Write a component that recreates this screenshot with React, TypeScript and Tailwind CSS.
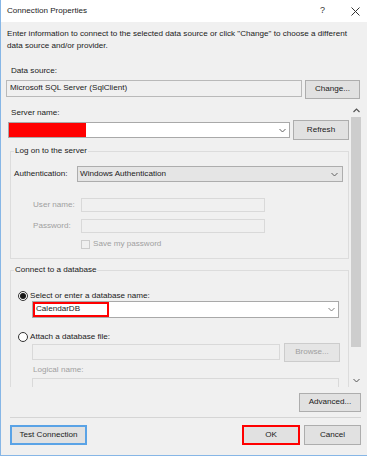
import React from "react";

function Btn({
  label,
  className = "",
  disabled = false,
}: {
  label: string;
  className?: string;
  disabled?: boolean;
}) {
  return (
    <div
      className={`flex items-center justify-center border ${
        disabled
          ? "border-[#cccccc] bg-[#e5e5e5] text-[#a0a0a0]"
          : "border-[#adadad] bg-[#e1e1e1] text-[#1a1a1a]"
      } ${className}`}
    >
      {label}
    </div>
  );
}

function Chevron({ color = "#606060" }: { color?: string }) {
  return (
    <svg width="7" height="5" viewBox="0 0 7 5" fill="none">
      <path d="M0.5 1 L3.5 4 L6.5 1" stroke={color} strokeWidth="1" />
    </svg>
  );
}

function Radio({ checked }: { checked?: boolean }) {
  return (
    <span className="flex h-[10px] w-[10px] items-center justify-center rounded-full border border-[#333333] bg-white">
      {checked && <span className="h-[6px] w-[6px] rounded-full bg-[#1a1a1a]" />}
    </span>
  );
}

export default function App() {
  return (
    <div
      className="relative h-[456px] w-[367px] overflow-hidden whitespace-nowrap border-b border-l border-[#86b6e6] bg-[#f0f0f0] text-[8.1px] text-[#1a1a1a]"
      style={{ fontFamily: '"Liberation Sans", Arial, sans-serif' }}
    >
      {/* title bar */}
      <div className="flex h-[22px] items-center bg-white pl-[6px]">
        <span className="flex-1">Connection Properties</span>
        <span className="w-[31px] text-[9px] text-[#333]">?</span>
        <svg width="9" height="9" viewBox="0 0 9 9" className="mr-[7px]">
          <path d="M0.5 0.5 L8.5 8.5 M8.5 0.5 L0.5 8.5" stroke="#333" strokeWidth="1" />
        </svg>
      </div>

      {/* description */}
      <div className="px-[6px] pt-[6px] leading-[12px]">
        Enter information to connect to the selected data source or click "Change" to choose a different
        <br />
        data source and/or provider.
      </div>

      <div className="mt-[13px] pl-[10px] leading-[12px]">Data source:</div>
      <div className="mt-[3px] flex h-[19px] items-start pl-[5px]">
        <div className="flex h-[17px] w-[296px] items-center border border-[#b9b9b9] bg-[#f0f0f0] pl-[3px]">
          Microsoft SQL Server (SqlClient)
        </div>
        <Btn label="Change..." className="ml-[3px] h-[19px] w-[55px]" />
      </div>

      {/* scroll panel */}
      <div className="ml-[4px] mt-[5px] flex h-[283px] w-[357px]">
        <div className="h-full w-[345px] overflow-hidden">
          <div className="pl-[6px] pt-[3px] leading-[12px]">Server name:</div>
          <div className="mt-[1px] flex h-[20px] items-start">
            <div className="ml-[3px] mt-[2px] flex h-[16px] w-[282px] items-center border border-[#a9a9a9] bg-white">
              <span className="h-full w-[77px] bg-[#ff0000]" />
              <span className="flex-1" />
              <span className="mr-[3px]">
                <Chevron />
              </span>
            </div>
            <Btn label="Refresh" className="ml-[3px] h-[20px] w-[56px]" />
          </div>

          {/* log on group */}
          <fieldset className="ml-[5px] mt-[5px] h-[114px] w-[339px] border border-[#dcdcdc] px-[3px]">
            <legend className="px-[1px] leading-[12px]">Log on to the server</legend>
            <div className="mt-[9px] flex h-[16px] items-center">
              <span className="w-[63px]">Authentication:</span>
              <div className="flex h-[16px] w-[266px] items-center border border-[#adadad] bg-[#e5e5e5] pl-[2px]">
                <span className="flex-1">Windows Authentication</span>
                <span className="mr-[4px]">
                  <Chevron />
                </span>
              </div>
            </div>
            <div className="mt-[16px] flex h-[14px] items-center text-[#a0a0a0]">
              <span className="ml-[19px] w-[48px]">User name:</span>
              <div className="h-[14px] w-[184px] border border-[#d9d9d9] bg-[#f0f0f0]" />
            </div>
            <div className="mt-[7px] flex h-[14px] items-center text-[#a0a0a0]">
              <span className="ml-[19px] w-[48px]">Password:</span>
              <div className="h-[14px] w-[184px] border border-[#d9d9d9] bg-[#f0f0f0]" />
            </div>
            <div className="mt-[5px] flex h-[12px] items-center text-[#a0a0a0]">
              <span className="ml-[67px] h-[9px] w-[9px] border border-[#cccccc] bg-[#f0f0f0]" />
              <span className="ml-[3px]">Save my password</span>
            </div>
          </fieldset>

          {/* connect group */}
          <fieldset className="ml-[5px] mt-[5px] h-[140px] w-[339px] border border-[#dcdcdc] px-[3px]">
            <legend className="px-[1px] leading-[12px]">Connect to a database</legend>
            <div className="mt-[15px] flex h-[10px] items-center">
              <span className="ml-[4px]">
                <Radio checked />
              </span>
              <span className="ml-[2px]">Select or enter a database name:</span>
            </div>
            <div className="ml-[18px] mt-0 flex h-[17px] w-[307px] items-center border border-[#a9a9a9] bg-white">
              <span className="flex h-full w-[76px] items-center border-2 border-[#ff0000] pl-[1px]">
                CalendarDB
              </span>
              <span className="flex-1" />
              <span className="mr-[3px]">
                <Chevron color="#808080" />
              </span>
            </div>
            <div className="mt-[13px] flex h-[12px] items-center">
              <span className="ml-[4px]">
                <Radio />
              </span>
              <span className="ml-[2px]">Attach a database file:</span>
            </div>
            <div className="flex h-[19px] items-start">
              <div className="ml-[18px] mt-[1px] h-[16px] w-[248px] border border-[#d9d9d9] bg-[#f0f0f0]" />
              <Btn label="Browse..." disabled className="ml-[4px] h-[19px] w-[56px]" />
            </div>
            <div className="ml-[19px] mt-[2px] leading-[12px] text-[#a0a0a0]">Logical name:</div>
            <div className="ml-[18px] mt-[2px] h-[16px] w-[307px] border border-[#d9d9d9] bg-[#f0f0f0]" />
          </fieldset>
        </div>

        {/* scrollbar */}
        <div className="flex h-full w-[12px] flex-col items-center">
          <div className="flex h-[13px] items-center">
            <svg width="7" height="5" viewBox="0 0 7 5">
              <path d="M0.5 4 L3.5 1 L6.5 4" stroke="#555" strokeWidth="1.2" fill="none" />
            </svg>
          </div>
          <div className="h-[230px] w-[10px] bg-[#cdcdcd]" />
          <div className="flex-1" />
          <div className="flex h-[13px] items-center">
            <Chevron color="#555" />
          </div>
        </div>
      </div>

      <div className="mt-[6px] flex justify-end pr-[6px]">
        <Btn label="Advanced..." className="h-[19px] w-[62px]" />
      </div>
      <div className="ml-[9px] mt-[5px] h-px w-[351px] bg-[#d5d5d5]" />
      <div className="mt-[7px] flex h-[20px] items-center pl-[9px] pr-[6px]">
        <div className="flex h-[20px] w-[77px] items-center justify-center border-2 border-[#5aa3e6] bg-[#e1e1e1]">
          Test Connection
        </div>
        <span className="flex-1" />
        <div className="flex h-[20px] w-[58px] items-center justify-center border-2 border-[#ff0000] bg-[#e1e1e1]">
          OK
        </div>
        <Btn label="Cancel" className="ml-[4px] h-[20px] w-[57px]" />
      </div>
    </div>
  );
}
